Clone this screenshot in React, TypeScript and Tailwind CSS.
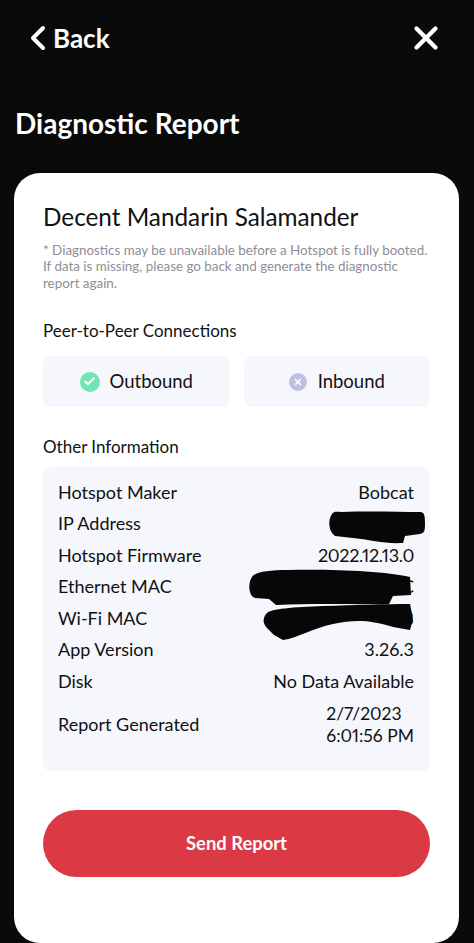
import React from 'react';
import { ChevronLeft, X, Check } from 'lucide-react';

// --- Data ---
const rows = [
  { label: 'Hotspot Maker', value: 'Bobcat' },
  { label: 'IP Address', value: '' },
  { label: 'Hotspot Firmware', value: '2022.12.13.0', tight: true },
  { label: 'Ethernet MAC', value: 'C' },
  { label: 'Wi-Fi MAC', value: '3' },
  { label: 'App Version', value: '3.26.3' },
  { label: 'Disk', value: 'No Data Available' },
];

// --- Redaction marks drawn over the values ---
const Scribbles = () => (
  <svg className="absolute left-0 top-0 w-[387px] h-[304px] pointer-events-none" viewBox="0 0 387 304" fill="#070707">
    <path d="M289 47 C291 44 294 45 298 45 C330 44 355 45 378 45 C382 46 382 50 382 58 C382 64 381 66 377 67 L362 69 L360 76 C340 77 330 73 310 71 L292 69 C285 64 285 52 289 47 Z" />
    <path d="M209 110 C212 105 225 103 245 103 C290 102 340 104 367 110 L368 128 L350 129 L346 137 C320 138 280 136 233 138 L226 132 L212 131 C205 129 205 115 209 110 Z" />
    <path d="M224 146 C228 142 250 140 280 139 C310 138 345 137 367 137 L370 152 L367 163 L350 160 C325 152 310 153 290 157 C270 161 255 171 240 173 L231 168 L224 161 C219 156 220 150 224 146 Z" />
  </svg>
);

export default function App() {
  return (
    <main className="w-[474px] h-[943px] overflow-hidden bg-[#0a0a0a] flex flex-col font-['Lato','Open_Sans',sans-serif]">
      <div className="h-[77px] pt-[22px] pl-[18px] pr-[29px] flex items-start justify-between text-white">
        <div className="flex items-center h-[32px]">
          <ChevronLeft className="w-[40px] h-[40px]" strokeWidth={2.4} />
          <span className="-ml-[5px] text-[26px] font-bold">Back</span>
        </div>
        <div className="h-[32px] flex items-center">
          <X className="w-[38px] h-[38px]" strokeWidth={2.7} />
        </div>
      </div>

      <h1 className="h-[96px] pt-[26px] pl-[15px] text-[28px] leading-[40px] font-bold text-white">Diagnostic Report</h1>

      <section className="mx-[14px] w-[445px] flex-1 bg-white rounded-[26px] px-[29px] pt-[26px] text-[#111]">
        <h2 className="text-[24.3px] leading-[36px]">Decent Mandarin Salamander</h2>
        <p className="mt-[7px] whitespace-nowrap text-[13.4px] leading-[16.4px] text-[#8e8e96]">
          * Diagnostics may be unavailable before a Hotspot is fully booted.<br />
          If data is missing, please go back and generate the diagnostic<br />
          report again.
        </p>

        <h3 className="mt-[28px] text-[17px] leading-[24px]">Peer-to-Peer Connections</h3>
        <div className="mt-[13px] grid grid-cols-2 gap-[14px]">
          <div className="h-[51px] rounded-lg bg-[#f6f7fc] flex items-center justify-center gap-[10px] text-[18.5px]">
            <span className="w-[20px] h-[20px] rounded-full bg-[#6ee7b0] flex items-center justify-center">
              <Check className="w-[13px] h-[13px] text-white" strokeWidth={3.5} />
            </span>
            Outbound
          </div>
          <div className="h-[51px] rounded-lg bg-[#f6f7fc] flex items-center justify-center gap-[11px] text-[18.5px]">
            <span className="w-[18px] h-[18px] rounded-full bg-[#bcbfe0] flex items-center justify-center">
              <X className="w-[10px] h-[10px] text-white" strokeWidth={4} />
            </span>
            Inbound
          </div>
        </div>

        <h3 className="mt-[28px] text-[17px] leading-[24px]">Other Information</h3>
        <div className="relative mt-[8px] h-[304px] rounded-lg bg-[#f6f7fc] pl-[15px] pr-[16px] pt-[9px] text-[18px]">
          {rows.map((r) => (
            <div key={r.label} className="h-[31.6px] flex items-center justify-between">
              <span>{r.label}</span>
              <span className={r.tight ? 'tracking-[-0.33px] [font-variant-numeric:proportional-nums]' : '[font-variant-numeric:proportional-nums]'}>{r.value}</span>
            </div>
          ))}
          <div className="mt-[6px] flex items-center justify-between leading-[21.5px]">
            <span>Report Generated</span>
            <span className="text-[17.5px] [font-variant-numeric:proportional-nums]">2/7/2023<br />6:01:56 PM</span>
          </div>
          <Scribbles />
        </div>

        <button className="mt-[39px] w-full h-[67px] rounded-full bg-[#db3a45] text-white text-[18.4px] font-bold">Send Report</button>
      </section>
    </main>
  );
}
